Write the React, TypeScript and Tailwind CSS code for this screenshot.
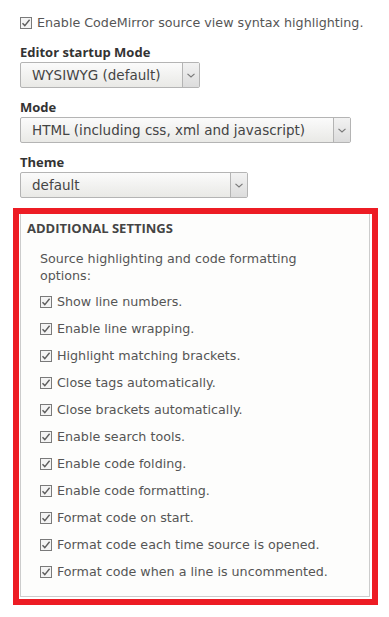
import React from 'react';

const CheckIcon = () => (
  <svg width="12" height="12" viewBox="0 0 12 12" className="shrink-0">
    <rect x="0.5" y="0.5" width="11" height="11" fill="#f4f4f4" stroke="#7a7a7a" />
    <path d="M2.5 6.2 L4.8 8.6 L9.6 2.8" fill="none" stroke="#5e5e5e" strokeWidth="1.4" />
  </svg>
);

const bodyFont = { fontFamily: '"DejaVu Sans", "Open Sans", sans-serif' };

const Select = ({ value, width }: { value: string; width: string }) => (
  <div className={`flex h-[26px] ${width} rounded-[2px] border border-[#b4b4b4] bg-gradient-to-b from-[#fbfbfb] to-[#e9e9e6]`}>
    <div className="flex-1 pl-[11px] text-[13.5px] leading-[24px] text-[#444]" style={bodyFont}>
      {value}
    </div>
    <div className="flex w-[17px] items-center justify-center border-l border-[#b4b4b4] bg-gradient-to-b from-[#f2f2f2] to-[#dcdcdc]">
      <svg width="8" height="5" viewBox="0 0 8 5">
        <path d="M0.5 0.8 L4 4 L7.5 0.8" fill="none" stroke="#777" strokeWidth="1.1" />
      </svg>
    </div>
  </div>
);

const App = () => {
  const options = [
    'Show line numbers.',
    'Enable line wrapping.',
    'Highlight matching brackets.',
    'Close tags automatically.',
    'Close brackets automatically.',
    'Enable search tools.',
    'Enable code folding.',
    'Enable code formatting.',
    'Format code on start.',
    'Format code each time source is opened.',
    'Format code when a line is uncommented.',
  ];

  return (
    <div
      className="h-[617px] w-[389px] bg-white pt-[14px] text-[13px] text-[#555]"
      style={{ fontFamily: '"Open Sans", "DejaVu Sans", sans-serif' }}
    >
      <div className="pl-[20px] pr-[4px]">
        {/* CodeMirror toggle */}
        <div className="flex items-center gap-[5px] text-[12.7px] leading-[18px]" style={bodyFont}>
          <CheckIcon />
          <span>Enable CodeMirror source view syntax highlighting.</span>
        </div>

        <div className="mt-[11px] font-bold leading-[18px] text-[#333]">Editor startup Mode</div>
        <div className="mt-[1px]">
          <Select value="WYSIWYG (default)" width="w-[180px]" />
        </div>

        <div className="mt-[10px] font-bold leading-[18px] text-[#333]">Mode</div>
        <div className="mt-[1px]">
          <Select value="HTML (including css, xml and javascript)" width="w-[331px]" />
        </div>

        <div className="mt-[10px] font-bold leading-[18px] text-[#333]">Theme</div>
        <div className="mt-[1px]">
          <Select value="default" width="w-[228px]" />
        </div>
      </div>

      {/* Additional settings, highlighted */}
      <div className="ml-[13px] mt-[10px] w-[365px] border-[6px] border-[#ed1c24] pb-[2px] pl-[1px] pr-[2px]">
        <fieldset className="border border-t-0 border-[#cccccc] bg-[#fdfdfc] pb-[15px] pl-[6px] pr-[6px] pt-[5px]">
          <div className="font-bold uppercase leading-[18px] text-[#444]">Additional settings</div>
          <div className="pl-[13px] text-[12.7px]" style={bodyFont}>
            <p className="mt-[13px] leading-[17px]">
              Source highlighting and code formatting
              <br />
              options:
            </p>
            <div className="mt-[9px] flex flex-col gap-[9px]">
              {options.map((o) => (
                <div key={o} className="flex items-center gap-[5px] leading-[18px]">
                  <CheckIcon />
                  <span>{o}</span>
                </div>
              ))}
            </div>
          </div>
        </fieldset>
      </div>
    </div>
  );
};

export default App;
